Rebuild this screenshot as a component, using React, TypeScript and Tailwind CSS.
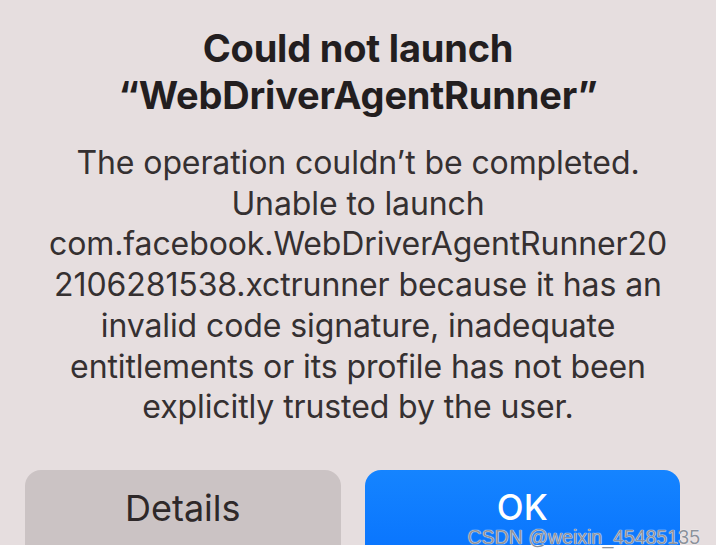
function App() {
  const lines = [
    "The operation couldn’t be completed.",
    "Unable to launch",
    "com.facebook.WebDriverAgentRunner20",
    "2106281538.xctrunner because it has an",
    "invalid code signature, inadequate",
    "entitlements or its profile has not been",
    "explicitly trusted by the user.",
  ];

  return (
    <div className="relative h-[558px] w-[716px] overflow-hidden bg-white font-['Inter',sans-serif]">
      <div className="flex h-[545px] flex-col items-center bg-[#e6dedf] pt-[25px]">
        <h1 className="text-center text-[38px] font-bold leading-[47px] tracking-[-0.2px] text-[#231e1f]">
          Could not launch
          <br />
          “WebDriverAgentRunner”
        </h1>

        <div className="mt-[24px] flex flex-col items-center text-[32px] leading-[40.7px] tracking-[-0.1px] text-[#353031]">
          {lines.map((l) => (
            <p key={l} className="whitespace-nowrap">
              {l}
            </p>
          ))}
        </div>

        <div className="mt-auto flex w-full gap-[24px] pl-[25px] pr-[36px]">
          <button className="flex h-[75px] flex-1 items-center justify-center rounded-t-[16px] bg-[#cbc3c4] text-[36px] text-[#2e2829]">
            Details
          </button>
          <button className="flex h-[75px] flex-1 items-center justify-center rounded-t-[16px] bg-gradient-to-b from-[#1584ff] to-[#0a76fe] text-[35px] font-medium text-white">
            OK
          </button>
        </div>
      </div>

      <span className="absolute bottom-[11px] right-[16px] font-['Liberation_Sans',sans-serif] text-[19.5px] leading-none text-[#8d929b] [text-shadow:0_0_1px_#fff,0_0_1px_#fff]">
        CSDN @weixin_45485135
      </span>
    </div>
  );
}

export default App;
